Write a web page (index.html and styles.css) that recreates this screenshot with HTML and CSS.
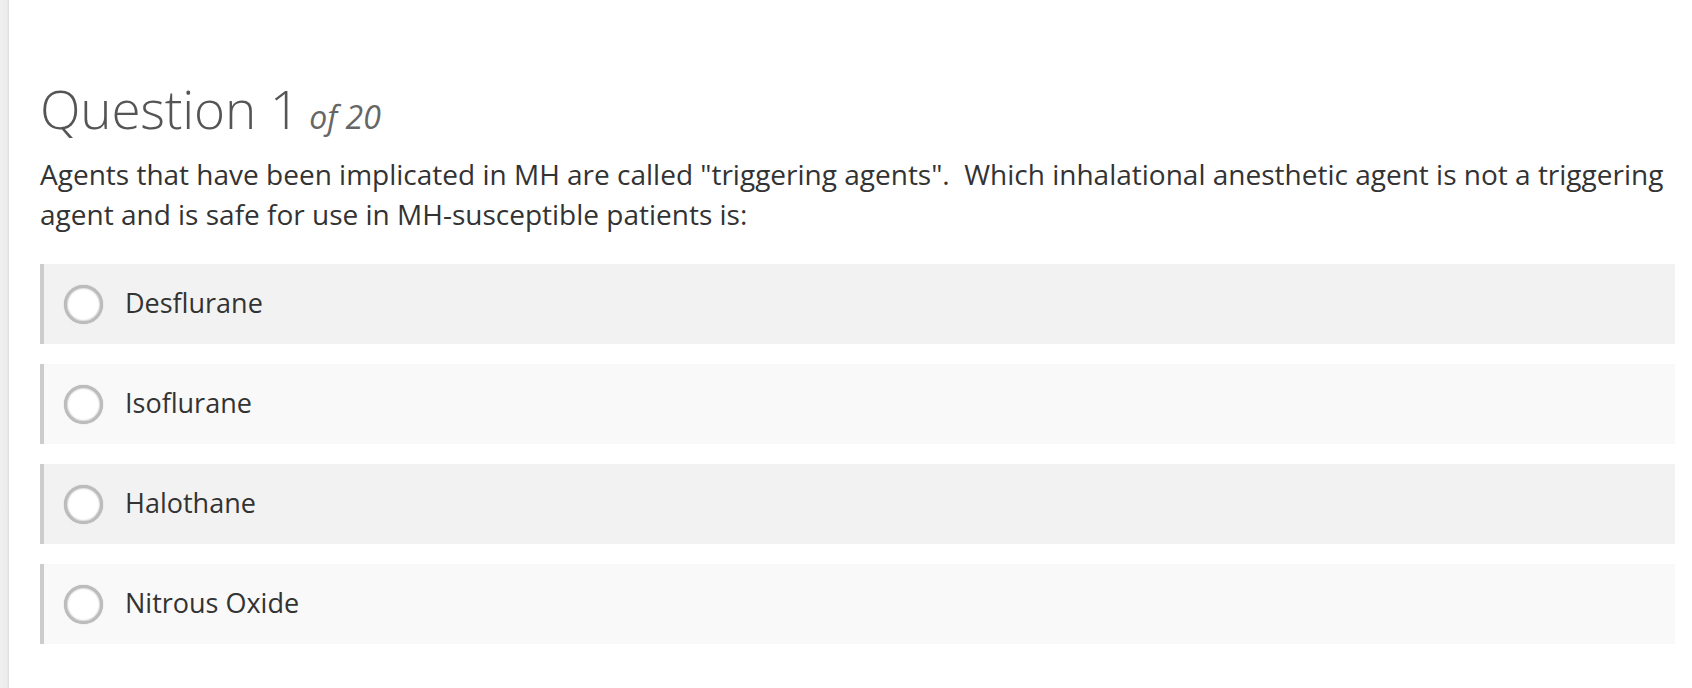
FILE: index.html
```html
<!DOCTYPE html>
<html>
<head>
<meta charset="utf-8">
<link rel="stylesheet" href="styles.css">
</head>
<body>
<div class="page">
  <div class="strip"></div>
  <main class="main">
    <h1 class="title">Question 1 <span class="of">of 20</span></h1>
    <p class="question">Agents that have been implicated in MH are called "triggering agents".&nbsp; Which inhalational anesthetic agent is not a triggering agent and is safe for use in MH-susceptible patients is:</p>
    <ul class="options">
      <li class="option dark"><span class="radio"></span><span class="label">Desflurane</span></li>
      <li class="option light"><span class="radio"></span><span class="label">Isoflurane</span></li>
      <li class="option dark"><span class="radio"></span><span class="label">Halothane</span></li>
      <li class="option light"><span class="radio"></span><span class="label">Nitrous Oxide</span></li>
    </ul>
  </main>
</div>
</body>
</html>
```
FILE: styles.css
```css
html, body {
  margin: 0;
  padding: 0;
  background: #fff;
}
body {
  font-family: "Open Sans", "Liberation Sans", sans-serif;
  color: #333;
}
.page {
  display: flex;
  min-height: 688px;
}
.strip {
  width: 9px;
  flex: none;
  background: linear-gradient(to right, #f0f0f0 0, #ececec 7px, #dcdcdc 9px);
}
.main {
  flex: none;
  width: 1635px;
  margin-left: 31px;
}
.title {
  margin: 74px 0 0 0;
  font-size: 53px;
  font-weight: 300;
  line-height: 70px;
  color: #555;
  letter-spacing: -0.2px;
}
.of {
  font-size: 32px;
  line-height: 1;
  font-style: italic;
  font-weight: 500;
  color: #666;
  letter-spacing: 0;
  margin-left: -4px;
}
.question {
  margin: 10px 0 0 0;
  font-size: 28px;
  line-height: 40px;
  color: #333;
}
.options {
  list-style: none;
  margin: 30px 0 0 0;
  padding: 0;
  display: flex;
  flex-direction: column;
  gap: 20px;
}
.option {
  height: 80px;
  box-sizing: border-box;
  border-left: 4px solid #cccccc;
  padding-left: 20px;
  display: flex;
  align-items: center;
  gap: 22px;
}
.option.dark { background: #f2f2f2; }
.option.light { background: #f9f9f9; }
.radio {
  width: 39px;
  height: 39px;
  box-sizing: border-box;
  border-radius: 50%;
  background: #fff;
  border: 3px solid #bcbcbc;
  box-shadow: 0 0 1px #aaa, inset 0 0 2px #999;
  flex: none;
}
.label {
  font-size: 27px;
  color: #333;
  padding-bottom: 4px;
}
```
